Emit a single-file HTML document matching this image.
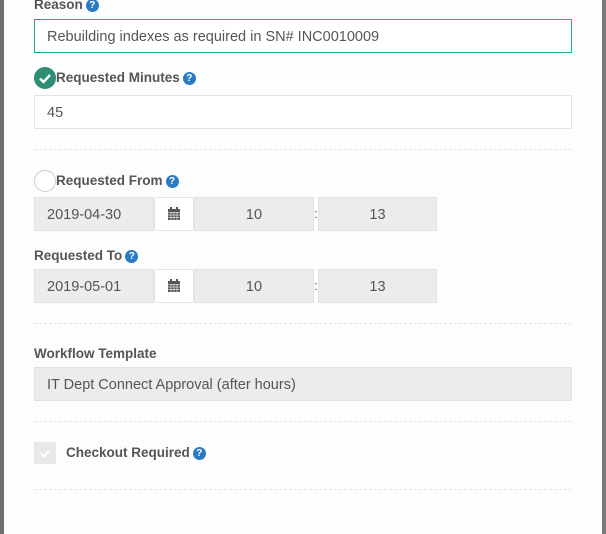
<!DOCTYPE html>
<html><head><style>
*{box-sizing:border-box;margin:0;padding:0}
body{width:606px;height:534px;overflow:hidden;background:#777;font-family:"Liberation Sans",sans-serif;position:relative}
.modal{position:absolute;left:4px;top:0;width:598px;height:534px;background:#fdfdfd}
.a{position:absolute}
.lbl{font-weight:bold;font-size:13.5px;color:#555;}
.q{display:inline-block;width:13px;height:13px;border-radius:50%;background:#2a7bc2;color:#fff;font-size:10px;line-height:13px;text-align:center;font-weight:bold;vertical-align:1px;margin-left:3px}
.inp{border:1px solid #e3e3e3;background:#fff;font-size:14.5px;color:#555;padding-left:12px;padding-top:2px;display:flex;align-items:center}
.dis{background:#ececec;border-color:#e1e1e1}
.dash{position:absolute;left:34px;width:538px;border-top:1px dashed #e4e4e4}
.c{justify-content:center;padding:0}
.c.t{padding-top:2px}
</style></head><body>
<div class="a" style="left:0;top:0;width:4px;height:534px;background:#6f6f6f"></div>
<div class="a" style="left:602px;top:0;width:4px;height:534px;background:#7a7a7a"></div>
<div class="modal"></div>
<div class="a lbl" style="left:34px;top:-3px">Reason<span class="q">?</span></div>
<div class="a inp" style="left:34px;top:19px;width:538px;height:34px;border-color:#26a98a">Rebuilding indexes as required in SN# INC0010009</div>
<div class="a" style="left:34px;top:67px;width:22px;height:22px;border-radius:50%;background:#2e8d74"><svg width="22" height="22"><path d="M6 11.5l3.5 3.5 6.5-7" stroke="#fff" stroke-width="2.4" fill="none"/></svg></div>
<div class="a lbl" style="left:56px;top:70px">Requested Minutes<span class="q">?</span></div>
<div class="a inp" style="left:34px;top:95px;width:538px;height:34px">45</div>
<div class="dash" style="top:149px"></div>
<div class="a" style="left:34px;top:170px;width:22px;height:22px;border-radius:50%;border:1px solid #ccc;background:#fff"></div>
<div class="a lbl" style="left:56px;top:173px">Requested From<span class="q">?</span></div>
<div class="a inp dis" style="left:34px;top:197px;width:120px;height:34px">2019-04-30</div>
<div class="a inp c" style="left:154px;top:197px;width:40px;height:34px;border-radius:3px"><svg width="14" height="14"><rect x="1" y="2" width="12" height="11" fill="#555"/><rect x="3" y="0" width="2" height="3" fill="#555"/><rect x="9" y="0" width="2" height="3" fill="#555"/><path d="M1 5.5h12M1 8h12M1 10.5h12M4 5v8M7 5v8M10 5v8" stroke="#ddd" stroke-width=".8"/></svg></div>
<div class="a inp dis c t" style="left:194px;top:197px;width:120px;height:34px">10</div>
<div class="a" style="left:314px;top:206px;font-size:13px;color:#555">:</div>
<div class="a inp dis c t" style="left:318px;top:197px;width:119px;height:34px">13</div>
<div class="a lbl" style="left:34px;top:248px">Requested To<span class="q">?</span></div>
<div class="a inp dis" style="left:34px;top:269px;width:120px;height:34px">2019-05-01</div>
<div class="a inp c" style="left:154px;top:269px;width:40px;height:34px;border-radius:3px"><svg width="14" height="14"><rect x="1" y="2" width="12" height="11" fill="#555"/><rect x="3" y="0" width="2" height="3" fill="#555"/><rect x="9" y="0" width="2" height="3" fill="#555"/><path d="M1 5.5h12M1 8h12M1 10.5h12M4 5v8M7 5v8M10 5v8" stroke="#ddd" stroke-width=".8"/></svg></div>
<div class="a inp dis c t" style="left:194px;top:269px;width:120px;height:34px">10</div>
<div class="a" style="left:314px;top:278px;font-size:13px;color:#555">:</div>
<div class="a inp dis c t" style="left:318px;top:269px;width:119px;height:34px">13</div>
<div class="dash" style="top:323px"></div>
<div class="a lbl" style="left:34px;top:346px">Workflow Template</div>
<div class="a inp dis" style="left:34px;top:367px;width:538px;height:34px">IT Dept Connect Approval (after hours)</div>
<div class="dash" style="top:421px"></div>
<div class="a" style="left:34px;top:442px;width:22px;height:22px;background:#e8e8e8"><svg width="22" height="22"><path d="M7 11.5l3 3 5-6" stroke="#fff" stroke-width="2" fill="none"/></svg></div>
<div class="a lbl" style="left:66px;top:445px">Checkout Required<span class="q">?</span></div>
<div class="dash" style="top:489px"></div>
</body></html>
